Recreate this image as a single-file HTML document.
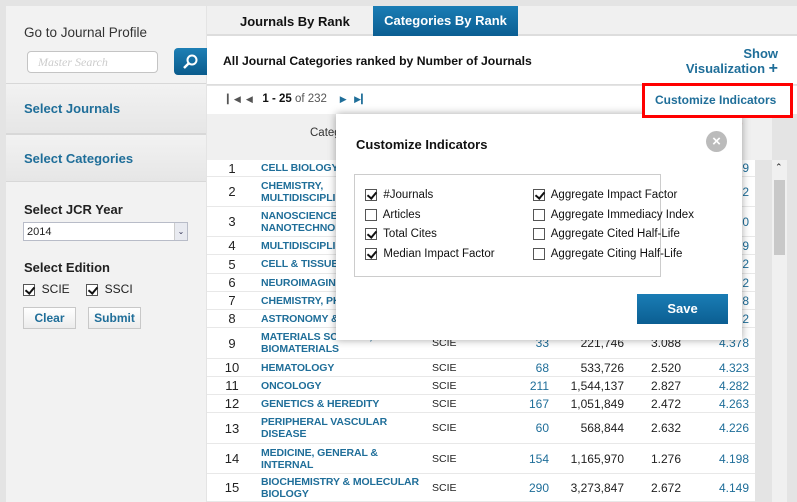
<!DOCTYPE html>
<html><head><style>
*{box-sizing:border-box;margin:0;padding:0}
body{width:797px;height:502px;overflow:hidden;background:#e4e4e4;font-family:"Liberation Sans",Arial,sans-serif;position:relative;font-size:12px;color:#222}
.a{position:absolute}
.left{left:6px;top:6px;width:200px;height:496px;background:#f2f2f2}
.lnk{color:#1f6e99;font-weight:bold}
.sec{left:6px;width:200px;background:linear-gradient(#f2f2f2,#e6e6e6);border-top:1px solid #d8d8d8;border-bottom:1px solid #d8d8d8}
.cb{display:inline-block;width:12px;height:12px;border:1px solid #555;background:#fff;position:relative;vertical-align:middle}
.cb.c::after{content:"";position:absolute;left:3px;top:0px;width:4px;height:7px;border:solid #111;border-width:0 2px 2px 0;transform:rotate(40deg)}
.btn{border:1px solid #c8c8c8;background:linear-gradient(#fff,#ececec);color:#1f6e99;font-weight:bold;text-align:center;line-height:20px}
.row{left:207px;width:548px;border-bottom:1px solid #e8e8e8;background:#fff}
.row>div{position:absolute;top:0;bottom:0;display:flex;align-items:center;white-space:nowrap}
.rk{left:0;width:50px;justify-content:center;font-size:13px}
.ct{left:54px;color:#1f6e99;font-weight:bold;font-size:10.5px;line-height:12px;letter-spacing:-0.1px}
.ed{left:225px;font-size:10.5px}
.nj{right:206px;color:#1f6e99}
.tc{right:131px}
.mi{right:74px}
.ai{right:6px;color:#1f6e99}
.modal{left:336px;top:114px;width:406px;height:226px;background:#fff;box-shadow:0 0 8px rgba(0,0,0,.35)}
.mi2{font-size:11.5px;color:#111;white-space:nowrap}
</style></head><body>
<div class="a left"></div>
<div class="a" style="left:24px;top:25px;font-size:13.5px;color:#333">Go to Journal Profile</div>
<div class="a" style="left:27px;top:51px;width:131px;height:22px;background:#fff;border:1px solid #c4c4c4;border-radius:4px;font-family:'Liberation Serif',serif;font-style:italic;color:#ccc;font-size:12px;padding:3px 0 0 10px">Master Search</div>
<div class="a" style="left:174px;top:48px;width:33px;height:27px;background:linear-gradient(#1e7fb5,#0a5b8c);border-radius:4px 0 0 4px"><svg width="33" height="27"><circle cx="18" cy="12" r="4.5" fill="none" stroke="#fff" stroke-width="2"/><line x1="14.5" y1="15.5" x2="10" y2="20" stroke="#fff" stroke-width="2.5"/></svg></div>
<div class="a sec" style="top:83px;height:51px"></div>
<div class="a lnk" style="left:24px;top:101px;font-size:13px">Select Journals</div>
<div class="a sec" style="top:134px;height:48px"></div>
<div class="a lnk" style="left:24px;top:151px;font-size:13px">Select Categories</div>
<div class="a" style="left:24px;top:202px;font-size:13px;font-weight:bold">Select JCR Year</div>
<div class="a" style="left:23px;top:222px;width:165px;height:19px;background:#fff;border:1px solid #b8bcc8;font-size:11px;padding:3px 0 0 3px">2014<div class="a" style="right:0;top:0;width:13px;height:17px;background:#e8eaf0;border-left:1px solid #ccc;font-size:8px;color:#335;text-align:center;line-height:17px">&#8964;</div></div>
<div class="a" style="left:24px;top:260px;font-size:13px;font-weight:bold">Select Edition</div>
<div class="a" style="left:23px;top:282px;font-size:12px"><span class="cb c"></span>&nbsp; SCIE</div>
<div class="a" style="left:86px;top:282px;font-size:12px"><span class="cb c"></span>&nbsp; SSCI</div>
<div class="a btn" style="left:23px;top:307px;width:53px;height:22px">Clear</div>
<div class="a btn" style="left:88px;top:307px;width:53px;height:22px">Submit</div>

<div class="a" style="left:207px;top:6px;width:590px;height:30px;background:#f0f0f0;border-bottom:2px solid #ddd"></div>
<div class="a" style="left:240px;top:14px;font-size:13px;font-weight:bold;color:#111">Journals By Rank</div>
<div class="a" style="left:373px;top:6px;width:145px;height:30px;background:linear-gradient(#1a7db5,#0b5e92);color:#fff;font-size:13px;font-weight:bold;text-align:center;line-height:30px">Categories By Rank</div>
<div class="a" style="left:207px;top:36px;width:590px;height:49px;background:#fff;border-bottom:1px solid #ddd"></div>
<div class="a" style="left:223px;top:54px;font-size:12.2px;font-weight:bold;color:#111">All Journal Categories ranked by Number of Journals</div>
<div class="a lnk" style="left:660px;top:46px;font-size:13px;text-align:right;width:118px;line-height:15px;white-space:nowrap">Show<br>Visualization <span style="font-size:16px">+</span></div>
<div class="a" style="left:207px;top:86px;width:590px;height:28px;background:#fff"></div>
<div class="a" style="left:227px;top:93px;font-size:11.5px;color:#555;white-space:nowrap"><span style="font-size:9px">&#9614;&#9664;&nbsp;&nbsp;&#9664;</span>&nbsp;&nbsp; <b style="color:#111">1 - 25</b> of 232 &nbsp;&nbsp; <span style="color:#1f6e99;font-size:9px">&#9654;&nbsp;&nbsp; &#9654;&#9614;</span></div>
<div class="a" style="left:207px;top:114px;width:565px;height:46px;background:#f0f0f0"></div>
<div class="a" style="left:310px;top:127px;font-size:11.5px;color:#333">Category</div>
<div class="a" style="left:692px;top:118px;font-size:11px;color:#f3b0a8;line-height:13px;text-align:center">Aggregate<br>Impact<br>Factor</div>
<div class="a" style="left:772px;top:160px;width:15px;height:342px;background:#f0f0f0"><div class="a" style="left:2px;top:20px;width:11px;height:75px;background:#c8c8c8"></div><div class="a" style="left:3px;top:2px;font-size:9px">&#8963;</div></div>

<div class="a row" style="top:160px;height:17px"><div class="rk">1</div><div class="ct">CELL BIOLOGY</div><div class="ai">5.779</div></div>
<div class="a row" style="top:177px;height:30px"><div class="rk">2</div><div class="ct">CHEMISTRY,<br>MULTIDISCIPLINARY</div><div class="ai">5.602</div></div>
<div class="a row" style="top:207px;height:30px"><div class="rk">3</div><div class="ct">NANOSCIENCE &amp;<br>NANOTECHNOLOGY</div><div class="ai">5.310</div></div>
<div class="a row" style="top:237px;height:18px"><div class="rk">4</div><div class="ct">MULTIDISCIPLINARY</div><div class="ai">5.269</div></div>
<div class="a row" style="top:255px;height:19px"><div class="rk">5</div><div class="ct">CELL &amp; TISSUE</div><div class="ai">4.832</div></div>
<div class="a row" style="top:274px;height:18px"><div class="rk">6</div><div class="ct">NEUROIMAGING</div><div class="ai">4.552</div></div>
<div class="a row" style="top:292px;height:18px"><div class="rk">7</div><div class="ct">CHEMISTRY, PHYSICAL</div><div class="ai">4.438</div></div>
<div class="a row" style="top:310px;height:18px"><div class="rk">8</div><div class="ct">ASTRONOMY &amp; ASTROPHYSICS</div><div class="ai">4.402</div></div>
<div class="a row" style="top:328px;height:31px"><div class="rk">9</div><div class="ct">MATERIALS SCIENCE,<br>BIOMATERIALS</div><div class="ed">SCIE</div><div class="nj">33</div><div class="tc">221,746</div><div class="mi">3.088</div><div class="ai">4.378</div></div>
<div class="a row" style="top:359px;height:18px"><div class="rk">10</div><div class="ct">HEMATOLOGY</div><div class="ed">SCIE</div><div class="nj">68</div><div class="tc">533,726</div><div class="mi">2.520</div><div class="ai">4.323</div></div>
<div class="a row" style="top:377px;height:18px"><div class="rk">11</div><div class="ct">ONCOLOGY</div><div class="ed">SCIE</div><div class="nj">211</div><div class="tc">1,544,137</div><div class="mi">2.827</div><div class="ai">4.282</div></div>
<div class="a row" style="top:395px;height:18px"><div class="rk">12</div><div class="ct">GENETICS &amp; HEREDITY</div><div class="ed">SCIE</div><div class="nj">167</div><div class="tc">1,051,849</div><div class="mi">2.472</div><div class="ai">4.263</div></div>
<div class="a row" style="top:413px;height:31px"><div class="rk">13</div><div class="ct">PERIPHERAL VASCULAR<br>DISEASE</div><div class="ed">SCIE</div><div class="nj">60</div><div class="tc">568,844</div><div class="mi">2.632</div><div class="ai">4.226</div></div>
<div class="a row" style="top:444px;height:30px"><div class="rk">14</div><div class="ct">MEDICINE, GENERAL &amp;<br>INTERNAL</div><div class="ed">SCIE</div><div class="nj">154</div><div class="tc">1,165,970</div><div class="mi">1.276</div><div class="ai">4.198</div></div>
<div class="a row" style="top:474px;height:28px"><div class="rk">15</div><div class="ct">BIOCHEMISTRY &amp; MOLECULAR<br>BIOLOGY</div><div class="ed">SCIE</div><div class="nj">290</div><div class="tc">3,273,847</div><div class="mi">2.672</div><div class="ai">4.149</div></div>

<div class="a modal"></div>
<div class="a" style="left:356px;top:137px;font-size:13px;font-weight:bold;color:#111">Customize Indicators</div>
<div class="a" style="left:706px;top:131px;width:21px;height:21px;border-radius:50%;background:#bbb;color:#fff;font-weight:bold;font-size:15px;text-align:center;line-height:21px">×</div>
<div class="a" style="left:354px;top:174px;width:307px;height:103px;border:1px solid #ccc"></div>
<div class="a mi2" style="left:365px;top:189px"><span class="cb c"></span>&nbsp; #Journals</div>
<div class="a mi2" style="left:365px;top:209px"><span class="cb"></span>&nbsp; Articles</div>
<div class="a mi2" style="left:365px;top:228px"><span class="cb c"></span>&nbsp; Total Cites</div>
<div class="a mi2" style="left:365px;top:248px"><span class="cb c"></span>&nbsp; Median Impact Factor</div>
<div class="a mi2" style="left:533px;top:189px"><span class="cb c"></span>&nbsp; Aggregate Impact Factor</div>
<div class="a mi2" style="left:533px;top:209px"><span class="cb"></span>&nbsp; Aggregate Immediacy Index</div>
<div class="a mi2" style="left:533px;top:228px"><span class="cb"></span>&nbsp; Aggregate Cited Half-Life</div>
<div class="a mi2" style="left:533px;top:248px"><span class="cb"></span>&nbsp; Aggregate Citing Half-Life</div>
<div class="a" style="left:637px;top:294px;width:91px;height:30px;background:linear-gradient(#1a7db5,#0b5e92);color:#fff;font-weight:bold;font-size:13px;text-align:center;line-height:30px">Save</div>

<div class="a" style="left:642px;top:83px;width:151px;height:35px;border:3px solid #f00;background:#fff"></div>
<div class="a lnk" style="left:655px;top:93px;font-size:12px;white-space:nowrap">Customize Indicators</div>
</body></html>
